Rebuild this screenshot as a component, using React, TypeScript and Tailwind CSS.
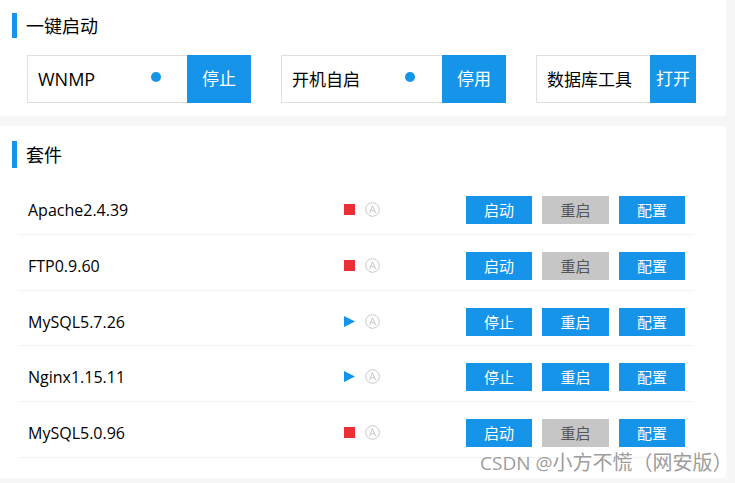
const font = { fontFamily: '"Open Sans", "Noto Sans CJK SC", sans-serif' };

function Title({ text, className }: { text: string; className: string }) {
  return (
    <div className={`flex items-center gap-[9px] pl-3 ${className}`}>
      <span className="w-[5px] h-full bg-[#1694e9]" />
      <span className="text-[18px] leading-none text-[#000]">{text}</span>
    </div>
  );
}

function Control({ label, btn, boxW, btnW, dotMr, textClass }: { label: string; btn: string; boxW: string; btnW: string; dotMr?: string; textClass: string }) {
  return (
    <div className="flex h-12">
      <div className={`${boxW} flex items-center justify-between border border-r-0 border-[#e0e0e0] ${textClass}`}>
        <span className="text-[#000] leading-none">{label}</span>
        {dotMr && <span className={`w-2.5 h-2.5 rounded-full bg-[#1694e9] -mt-1 ${dotMr}`} />}
      </div>
      <div className={`${btnW} flex items-center justify-center bg-[#1694e9] text-white text-[17px]`}>{btn}</div>
    </div>
  );
}

function AutoIcon() {
  return (
    <svg width="15" height="15" viewBox="0 0 15 15" fill="none" stroke="#c8c8c8" strokeWidth="1">
      <circle cx="7.5" cy="7.5" r="6.8" />
      <path d="M4.4 11.2 7.5 3.6 10.6 11.2M5.4 8.8h4.2" />
    </svg>
  );
}

function Btn({ text, off, w }: { text: string; off?: boolean; w: string }) {
  return (
    <div className={`${w} h-7 flex items-center justify-center text-[15px] ${off ? "bg-[#c6c6c6] text-[#555]" : "bg-[#1694e9] text-white"}`}>
      {text}
    </div>
  );
}

const rows = [
  { name: "Apache2.4.39", run: false, h: "h-14" },
  { name: "FTP0.9.60", run: false, h: "h-14" },
  { name: "MySQL5.7.26", run: true, h: "h-[55px]" },
  { name: "Nginx1.15.11", run: true, h: "h-14" },
  { name: "MySQL5.0.96", run: false, h: "h-14" },
];

export default function App() {
  return (
    <div className="relative w-[735px] h-[483px] overflow-hidden bg-[#f7f7f7]" style={font}>
      <div className="w-[726px] h-[116px] bg-white rounded-br-[3px] flex flex-col">
        <Title text="一键启动" className="h-[25px] mt-[13px]" />
        <div className="flex pl-[27px] gap-[30px] mt-[17px]">
          <Control label="WNMP" btn="停止" boxW="w-[160px]" btnW="w-[64px]" dotMr="mr-[26px]" textClass="pl-[10px] text-[18px]" />
          <Control label="开机自启" btn="停用" boxW="w-[161px]" btnW="w-[64px]" dotMr="mr-[27px]" textClass="pl-[10px] text-[17px]" />
          <Control label="数据库工具" btn="打开" boxW="w-[114px]" btnW="w-[46px]" textClass="pl-[10px] text-[17px]" />
        </div>
      </div>
      <div className="w-[726px] h-[352px] mt-[10px] bg-white rounded-r-[3px] flex flex-col">
        <Title text="套件" className="h-[27px] mt-[15px]" />
        <div className="flex flex-col mt-[11px] ml-[18px] w-[676px]">
          {rows.map((r) => (
            <div key={r.name} className={`${r.h} border-b border-[#f3f3f3] pl-[10px] pt-[17px]`}>
              <div className="flex items-center h-7">
                <span className="w-[316px] text-[16px] text-[#000]">{r.name}</span>
                <span className="w-[21px] flex items-center -mt-[1px]">
                  {r.run ? (
                    <svg width="11" height="11" viewBox="0 0 11 11"><path d="M0 0 11 5.5 0 11Z" fill="#1694e9" /></svg>
                  ) : (
                    <span className="w-[11px] h-[11px] bg-[#ea3034]" />
                  )}
                </span>
                <span className="-mt-[1px] flex"><AutoIcon /></span>
                <div className="flex gap-[10px] ml-[86px]">
                  <Btn text={r.run ? "停止" : "启动"} w="w-[66px]" />
                  <Btn text="重启" off={!r.run} w="w-[67px]" />
                  <Btn text="配置" w="w-[66px]" />
                </div>
              </div>
            </div>
          ))}
        </div>
      </div>
      <div className="absolute left-[480px] top-[451px] text-[20px] leading-6 text-[#8f8f8f]/90 whitespace-nowrap [text-spacing-trim:space-all]">
        <span className="text-[19px]">CSDN @</span>小方不慌（网安版）
      </div>
    </div>
  );
}
